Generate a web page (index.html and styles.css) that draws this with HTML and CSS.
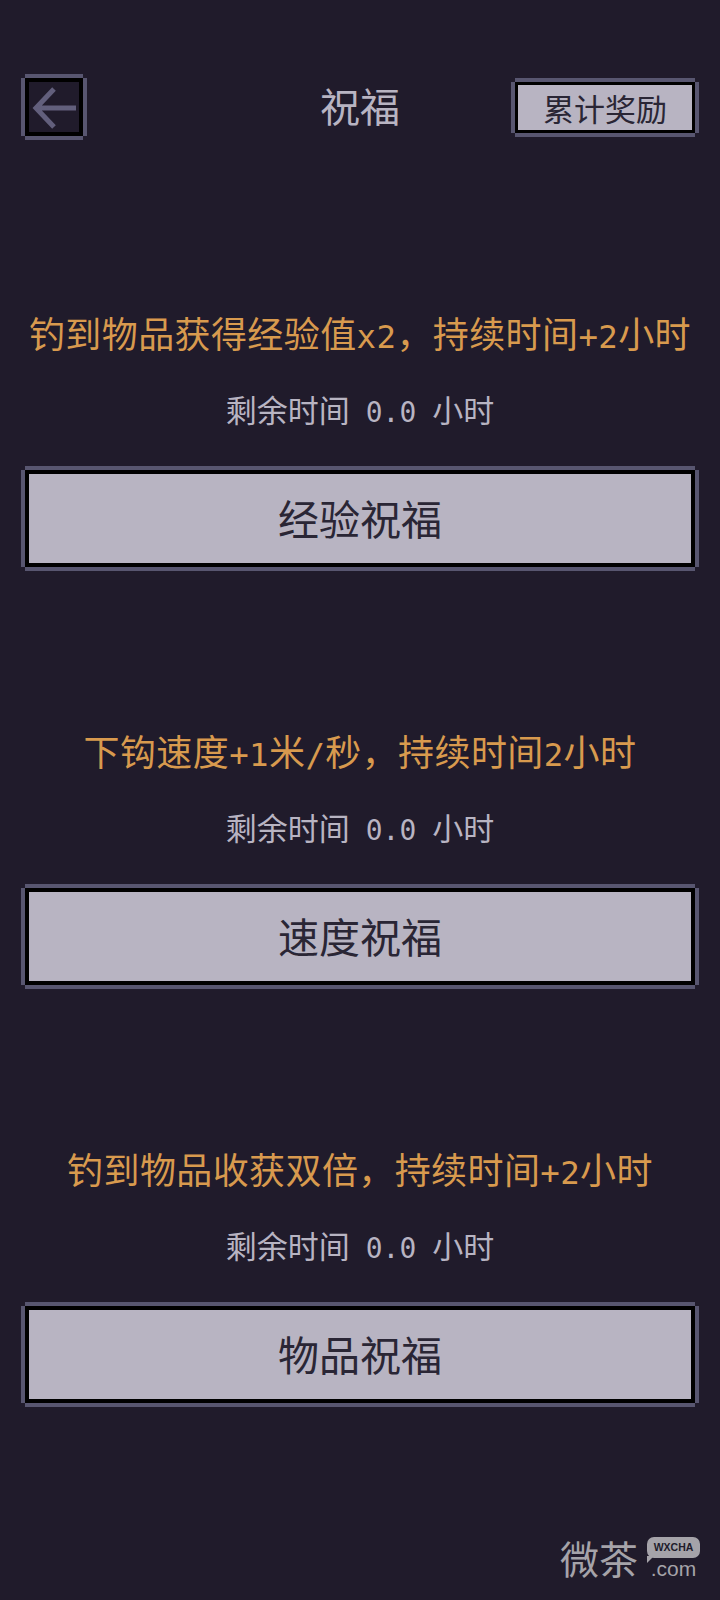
FILE: index.html
```html
<!DOCTYPE html>
<html lang="zh-CN">
<head>
  <meta charset="UTF-8">
  <meta name="viewport" content="width=device-width, initial-scale=1.0">
  <title>祝福</title>
  <link rel="stylesheet" href="styles.css">
</head>
<body>
  <div class="page">
    <div class="header">
      <button class="back">
        <svg width="50" height="50" viewBox="0 0 50 50">
          <path d="M47 26H9M25 7L7 26L25 45" fill="none" stroke="#625f7c" stroke-width="5"/>
        </svg>
      </button>
      <h1 class="title">祝福</h1>
      <button class="pixel-btn total">累计奖励</button>
    </div>

    <div class="section first">
      <p class="desc">钓到物品获得经验值<span class="latin">x2</span>，持续时间<span class="latin">+2</span>小时</p>
      <p class="remain">剩余时间 <span class="latin">0.0</span> 小时</p>
      <button class="pixel-btn big">经验祝福</button>
    </div>

    <div class="section">
      <p class="desc">下钩速度<span class="latin">+1</span>米<span class="latin">/</span>秒，持续时间<span class="latin">2</span>小时</p>
      <p class="remain">剩余时间 <span class="latin">0.0</span> 小时</p>
      <button class="pixel-btn big">速度祝福</button>
    </div>

    <div class="section">
      <p class="desc">钓到物品收获双倍，持续时间<span class="latin">+2</span>小时</p>
      <p class="remain">剩余时间 <span class="latin">0.0</span> 小时</p>
      <button class="pixel-btn big">物品祝福</button>
    </div>
  </div>

  <div class="watermark">
    <span class="wm-name">微茶</span>
    <div class="wm-side">
      <span class="wm-bubble">WXCHA</span>
      <span class="wm-com">.com</span>
    </div>
  </div>
</body>
</html>
```

FILE: styles.css
```css
body {
  margin: 0;
  width: 720px;
  height: 1600px;
  position: relative;
  overflow: hidden;
  background-color: #201b2b;
  font-family: "Noto Sans CJK SC", "Liberation Sans", sans-serif;
}
p, h1 {
  margin: 0;
  font-weight: normal;
}
button {
  font-family: inherit;
  padding: 0;
  cursor: pointer;
}
.page {
  padding: 78px 25px 0 25px;
}
.header {
  display: flex;
  align-items: center;
  justify-content: space-between;
  height: 58px;
  position: relative;
}
.back {
  width: 58px;
  height: 58px;
  background: #201b2b;
  border: 4px solid #000;
  box-shadow: 0 -4px 0 #585670, 0 4px 0 #585670, -4px 0 0 #585670, 4px 0 0 #585670;
  display: flex;
  align-items: center;
  justify-content: center;
}
.title {
  position: absolute;
  left: 0;
  right: 0;
  top: 0;
  text-align: center;
  font-size: 40px;
  line-height: 54px;
  color: #b8b4c2;
  pointer-events: none;
}
.pixel-btn {
  background: #b8b4c2;
  color: #2a2635;
  border: 4px solid #000;
  box-shadow: 0 -4px 0 #585670, 0 4px 0 #585670, -4px 0 0 #585670, 4px 0 0 #585670;
}
.total {
  width: 180px;
  height: 51px;
  margin-top: 1px;
  border-width: 3px;
  font-size: 31px;
  line-height: 40px;
}
.section {
  margin-top: 158px;
  text-align: center;
}
.section.first {
  margin-top: 171px;
}
.desc {
  height: 50px;
  font-size: 36px;
  line-height: 50px;
  letter-spacing: 0.4px;
  color: #d89a4e;
  white-space: nowrap;
}
.remain {
  height: 42px;
  margin-top: 31px;
  font-size: 31px;
  line-height: 42px;
  word-spacing: 9px;
  color: #b8b4c2;
  white-space: pre;
}
.big {
  display: block;
  width: 100%;
  height: 97px;
  margin-top: 40px;
  padding-bottom: 4px;
  font-size: 41px;
}
.latin {
  font-family: "DejaVu Sans Mono", monospace;
  font-size: 0.9em;
}
.watermark {
  position: absolute;
  left: 560px;
  top: 1532px;
  display: flex;
  align-items: flex-start;
  gap: 9px;
  color: #a5a3a9;
}
.wm-name {
  font-size: 39px;
  line-height: 50px;
}
.wm-side {
  display: flex;
  flex-direction: column;
  align-items: center;
  width: 53px;
  margin-top: 5px;
}
.wm-bubble {
  position: relative;
  width: 53px;
  height: 21px;
  background: #a5a3a9;
  color: #201b2b;
  border-radius: 7px;
  text-align: center;
  font-family: "Liberation Sans", sans-serif;
  font-size: 10.5px;
  font-weight: bold;
  line-height: 21px;
}
.wm-bubble::after {
  content: "";
  position: absolute;
  left: 0;
  bottom: -5px;
  border-top: 7px solid #a5a3a9;
  border-right: 7px solid transparent;
}
.wm-com {
  font-family: "Liberation Sans", sans-serif;
  font-size: 21px;
  line-height: 22px;
}
```
